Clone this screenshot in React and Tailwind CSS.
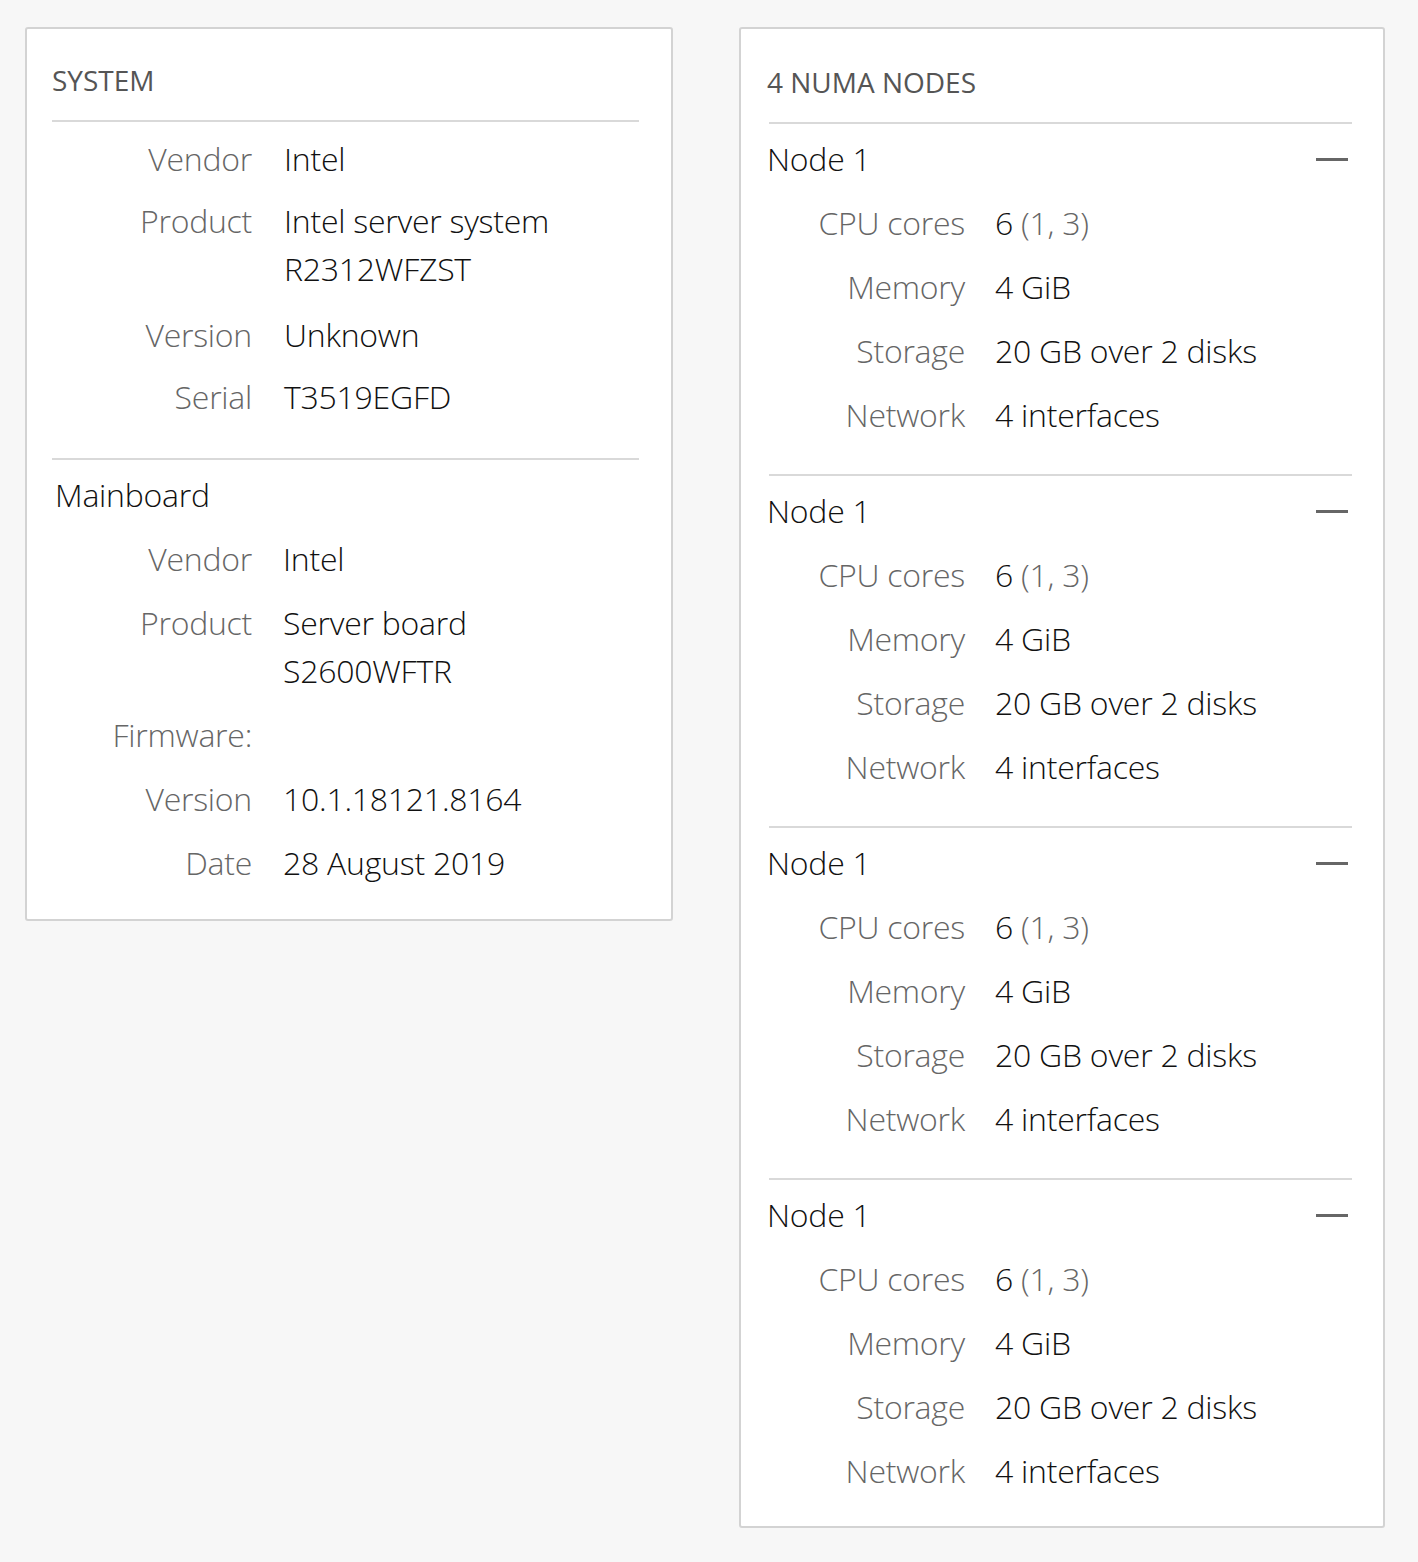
import React from "react";

function Row({ label, children, col = "w-[200px]", pad = "pl-[32px]", extra = "" }) {
  return (
    <div className={"flex leading-[48px] " + extra}>
      <div className={col + " shrink-0 text-right text-[#666]"}>{label}</div>
      <div className={pad + " text-[#111]"}>{children}</div>
    </div>
  );
}

function Divider({ className = "" }) {
  return <div className={"h-[2px] bg-[#d9d9d9] " + className} />;
}

function Minus() {
  return <div className="h-[3px] w-[32px] bg-[#666] mr-[4px]" />;
}

function Node({ last }) {
  return (
    <div className={last ? "pt-[11px] pb-[31px]" : "pt-[11px] pb-[35px]"}>
      <div className="flex items-center justify-between leading-[48px] text-[#111]">
        <span className="-ml-[2px]">Node 1</span>
        <Minus />
      </div>
      <div className="mt-[16px] flex flex-col gap-[16px]">
        <Row label="CPU cores" col="w-[196px]" pad="pl-[30px]">
          6 <span className="text-[#666]">(1, 3)</span>
        </Row>
        <Row label="Memory" col="w-[196px]" pad="pl-[30px]">4 GiB</Row>
        <Row label="Storage" col="w-[196px]" pad="pl-[30px]">20 GB over 2 disks</Row>
        <Row label="Network" col="w-[196px]" pad="pl-[30px]">4 interfaces</Row>
      </div>
    </div>
  );
}

export default function App() {
  return (
    <div className="min-h-[1562px] bg-[#f7f7f7] font-['Open_Sans',sans-serif] font-light text-[32px] tracking-[-0.25px]">
      <div className="flex items-start gap-[66px] pl-[25px] pt-[27px]">
        {/* Left card */}
        <div className="w-[648px] shrink-0 rounded-[3px] border-2 border-[#d3d3d3] bg-white pl-[25px] pr-[32px] pt-[27px] pb-[32px]">
          <div className="text-[28px] leading-[48px] text-[#555] font-normal tracking-normal">SYSTEM</div>
          <Divider className="mt-[16px]" />
          <div className="pt-[13px] flex flex-col gap-[14px]">
            <Row label="Vendor">Intel</Row>
            <Row label="Product" extra="pb-[4px]">
              <div>Intel server system</div>
              <div>R2312WFZST</div>
            </Row>
            <Row label="Version">Unknown</Row>
            <Row label="Serial">T3519EGFD</Row>
          </div>
          <Divider className="mt-[37px]" />
          <div className="pt-[11px]">
            <div className="pl-[3px] leading-[48px] text-[#111]">Mainboard</div>
            <div className="mt-[16px] flex flex-col gap-[16px]">
              <Row label="Vendor" pad="pl-[31px]">Intel</Row>
              <Row label="Product" pad="pl-[31px]">
                <div>Server board</div>
                <div>S2600WFTR</div>
              </Row>
              <Row label="Firmware:">{""}</Row>
              <Row label="Version" pad="pl-[31px]">10.1.18121.8164</Row>
              <Row label="Date" pad="pl-[31px]">28 August 2019</Row>
            </div>
          </div>
        </div>

        {/* Right card */}
        <div className="w-[646px] shrink-0 rounded-[3px] border-2 border-[#d3d3d3] bg-white pl-[28px] pr-[31px] pt-[29px]">
          <div className="-ml-[2px] text-[28px] leading-[48px] text-[#555] font-normal tracking-normal">4 NUMA NODES</div>
          <Divider className="mt-[16px]" />
          <Node />
          <Divider />
          <Node />
          <Divider />
          <Node />
          <Divider />
          <Node last />
        </div>
      </div>
    </div>
  );
}
